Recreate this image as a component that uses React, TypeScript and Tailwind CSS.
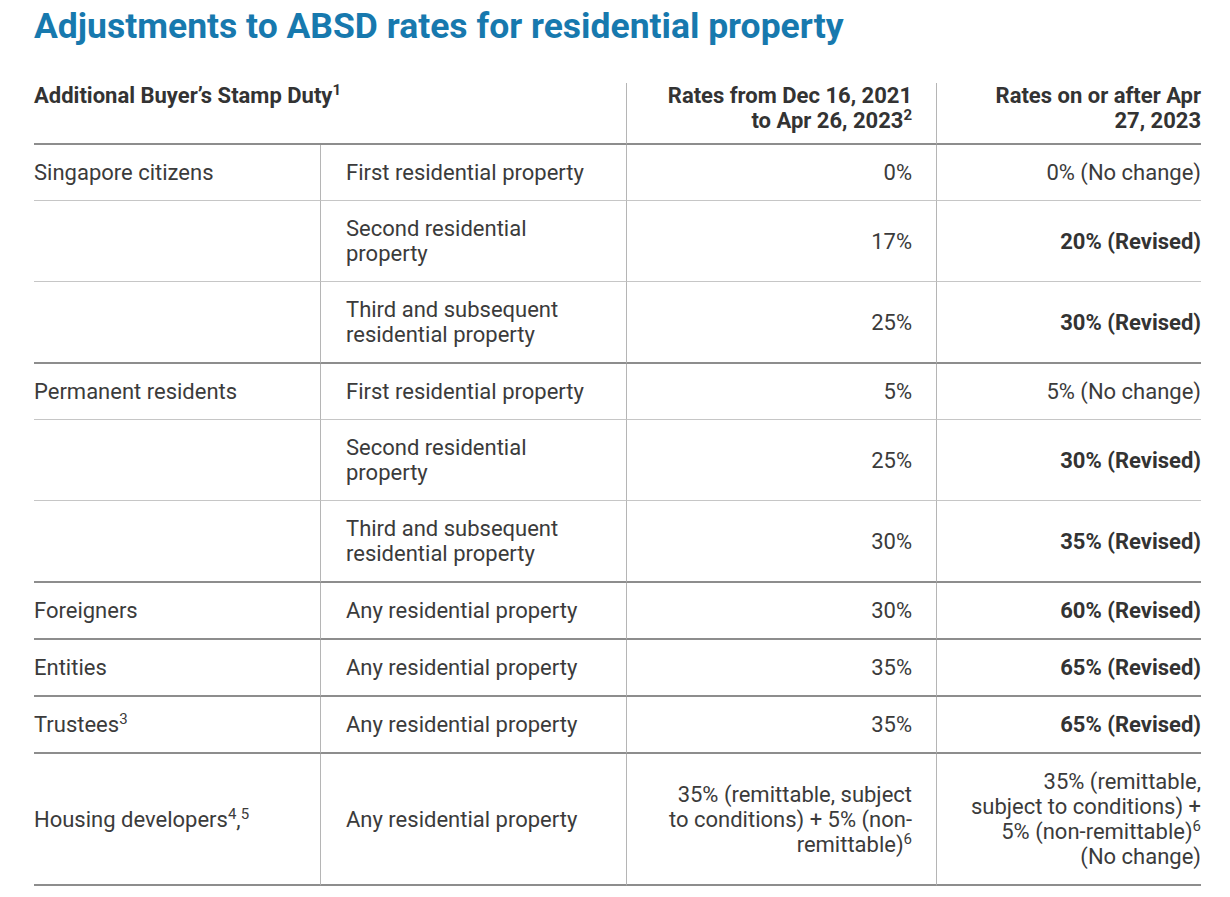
import React from "react";

type Row = {
  buyer?: React.ReactNode;
  property: React.ReactNode;
  before: React.ReactNode;
  after: React.ReactNode;
  revised?: boolean;
  thick?: boolean;
};

const Sup = ({ children }: { children: React.ReactNode }) => (
  <sup className="-top-[8px] text-[15px]">{children}</sup>
);

const rows: Row[] = [
  { buyer: "Singapore citizens", property: "First residential property", before: "0%", after: "0% (No change)" },
  { property: <>Second residential<br />property</>, before: "17%", after: "20% (Revised)", revised: true },
  { property: <>Third and subsequent<br />residential property</>, before: "25%", after: "30% (Revised)", revised: true, thick: true },
  { buyer: "Permanent residents", property: "First residential property", before: "5%", after: "5% (No change)" },
  { property: <>Second residential<br />property</>, before: "25%", after: "30% (Revised)", revised: true },
  { property: <>Third and subsequent<br />residential property</>, before: "30%", after: "35% (Revised)", revised: true, thick: true },
  { buyer: "Foreigners", property: "Any residential property", before: "30%", after: "60% (Revised)", revised: true, thick: true },
  { buyer: "Entities", property: "Any residential property", before: "35%", after: "65% (Revised)", revised: true, thick: true },
  { buyer: <>Trustees<Sup>3</Sup></>, property: "Any residential property", before: "35%", after: "65% (Revised)", revised: true, thick: true },
  {
    buyer: <>Housing developers<Sup>4</Sup>,<Sup>5</Sup></>,
    property: "Any residential property",
    before: <>35% (remittable, subject<br />to conditions) + 5% (non-<br />remittable)<Sup>6</Sup></>,
    after: <>35% (remittable,<br />subject to conditions) +<br />5% (non-remittable)<Sup>6</Sup><br />(No change)</>,
    thick: true,
  },
];

export default function App() {
  return (
    <div className="min-h-[897px] bg-white px-[34px] pt-[6px] text-[#3b3b3b]" style={{ fontFamily: "Roboto, 'Liberation Sans', sans-serif" }}>
      <h1 className="text-[35.5px] font-bold leading-[40px] text-[#1779ae]">
        Adjustments to ABSD rates for residential property
      </h1>

      <table className="mt-[37px] w-[1167px] table-fixed border-separate border-spacing-0 text-[22px] leading-[25px]">
        <colgroup>
          <col className="w-[286px]" />
          <col className="w-[306px]" />
          <col className="w-[310px]" />
          <col className="w-[265px]" />
        </colgroup>
        <thead>
          <tr className="align-top font-bold text-[#333]">
            <th colSpan={2} className="border-b-2 border-[#8d8d8d] pb-[10px] text-left font-bold">
              Additional Buyer’s Stamp Duty<Sup>1</Sup>
            </th>
            <th className="border-b-2 border-l border-[#8d8d8d] border-l-[#b5b5b5] pb-[10px] pr-[24px] text-right font-bold">
              Rates from Dec 16, 2021
              <br />
              to Apr 26, 2023<Sup>2</Sup>
            </th>
            <th className="border-b-2 border-l border-[#8d8d8d] border-l-[#b5b5b5] pb-[10px] text-right font-bold">
              Rates on or after Apr
              <br />
              27, 2023
            </th>
          </tr>
        </thead>
        <tbody>
          {rows.map((r, i) => {
            const b = r.thick ? "border-b-2 border-b-[#8d8d8d]" : "border-b border-b-[#c6c6c6]";
            return (
              <tr key={i} className="align-middle">
                <td className={`${b} py-[15px] pr-4`}>{r.buyer}</td>
                <td className={`${b} border-l border-l-[#b5b5b5] py-[15px] pl-[25px] pr-4`}>{r.property}</td>
                <td className={`${b} border-l border-l-[#b5b5b5] py-[15px] pr-[24px] text-right`}>{r.before}</td>
                <td className={`${b} border-l border-l-[#b5b5b5] py-[15px] text-right ${r.revised ? "font-bold text-[#333]" : ""}`}>
                  {r.after}
                </td>
              </tr>
            );
          })}
        </tbody>
      </table>
    </div>
  );
}
